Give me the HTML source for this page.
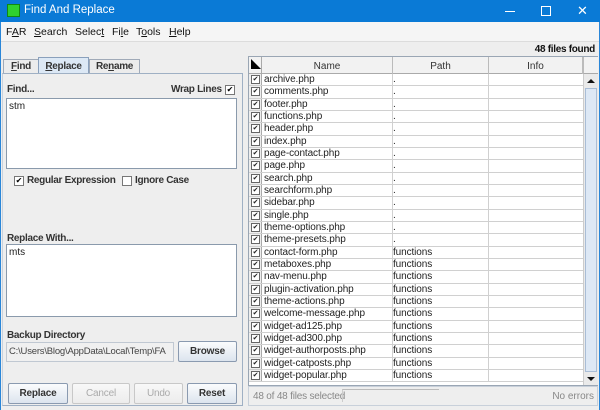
<!DOCTYPE html>
<html><head><style>
*{box-sizing:border-box;margin:0;padding:0}
body{width:600px;height:410px;overflow:hidden;background:#eeeeee;font-family:"Liberation Sans",Arial,sans-serif;font-size:10px;color:#222;position:relative}
.a{position:absolute}
.title{left:0;top:0;width:600px;height:22px;background:#0a7ad6;color:#fff;font-size:11.5px}
.menu{left:1px;top:22px;width:598px;height:20px;background:#f5f5f5;border-bottom:1px solid #dcdcdc}
.menu span{position:absolute;top:4px;font-size:10.5px;color:#111}
.b{font-weight:bold;letter-spacing:-0.3px;color:#333}
.box{background:#fff;border:1px solid #8a9aac}
.cb{width:10px;height:10px;border:1px solid #777;background:#fff;font-size:8px;line-height:8px;text-align:center;color:#000}
.btn{border:1px solid #8a9ab0;background:linear-gradient(#fbfcfd,#dce4ee);text-align:center;font-weight:bold;font-size:10px;letter-spacing:-0.2px;line-height:19px;border-radius:2px;color:#333}
.dis{color:#aaa;font-weight:normal;background:linear-gradient(#f8f8f8,#ececec);border-color:#c8c8c8}
.rows{left:249px;top:74px;width:334px}
.r{height:12.33px;border-bottom:1px solid #d0d0d0;position:relative;background:#fff;font-size:10px;line-height:11px;letter-spacing:-0.1px}
.r .c{position:absolute;left:0;top:0;width:13px;height:100%;background:#eeeeee;border-right:1px solid #aaa}
.r .c i{position:absolute;left:2px;top:1px;width:9px;height:9px;border:1px solid #666;background:#fff;font-style:normal;font-size:7px;line-height:7px;text-align:center}
.r .n{position:absolute;left:15px;top:0}
.r .p{position:absolute;left:144px;top:0}
.r:before{content:"";position:absolute;left:143px;top:0;height:100%;border-left:1px solid #d0d0d0}
.r:after{content:"";position:absolute;left:239px;top:0;height:100%;border-left:1px solid #d0d0d0}
</style></head><body>
<div class="a title">
 <div class="a" style="left:7px;top:4px;width:13px;height:13px;background:#2fd12f;border:1px solid #118811"></div>
 <div class="a" style="left:24px;top:4px">Find And Replace</div>
 <div class="a" style="left:505px;top:11px;width:10px;height:1px;background:#fff"></div>
 <div class="a" style="left:541px;top:6px;width:10px;height:10px;border:1px solid #fff"></div>
 <div class="a" style="left:577px;top:3px;font-size:13px">✕</div>
</div>
<div class="a" style="left:0;top:22px;width:1px;height:388px;background:#2a86d8"></div>
<div class="a" style="left:599px;top:22px;width:1px;height:388px;background:#2a86d8"></div>
<div class="a menu">
 <span style="left:5px">F<u>A</u>R</span><span style="left:33px"><u>S</u>earch</span><span style="left:74px">Selec<u>t</u></span><span style="left:111px">Fi<u>l</u>e</span><span style="left:135px">T<u>o</u>ols</span><span style="left:168px"><u>H</u>elp</span>
</div>
<div class="a b" style="right:5px;top:44px;color:#111">48 files found</div>
<!-- tabs -->
<div class="a b" style="left:3px;top:59px;width:36px;height:15px;border:1px solid #a0aab8;border-bottom:none;background:#ececec;text-align:center;line-height:14px"><u>F</u>ind</div>
<div class="a b" style="left:38px;top:57px;width:51px;height:17px;border:1px solid #8aa0bc;border-bottom:none;background:#dce8f5;text-align:center;line-height:17px"><u>R</u>eplace</div>
<div class="a b" style="left:89px;top:59px;width:51px;height:15px;border:1px solid #a0aab8;border-bottom:none;background:#ececec;text-align:center;line-height:14px">Re<u>n</u>ame</div>
<div class="a" style="left:2px;top:73px;width:241px;height:333px;border:1px solid #9fb0c4;border-left-color:#c8d2de"></div>
<div class="a b" style="left:7px;top:84px">Find...</div>
<div class="a b" style="left:171px;top:84px">Wrap Lines</div>
<div class="a cb" style="left:225px;top:85px">✔</div>
<div class="a box" style="left:6px;top:98px;width:231px;height:71px;padding:2px 2px">stm</div>
<div class="a cb" style="left:14px;top:176px">✔</div>
<div class="a b" style="left:27px;top:175px">Regular Expression</div>
<div class="a cb" style="left:122px;top:176px"></div>
<div class="a b" style="left:135px;top:175px">Ignore Case</div>
<div class="a b" style="left:7px;top:233px">Replace With...</div>
<div class="a box" style="left:6px;top:244px;width:231px;height:73px;padding:2px 2px">mts</div>
<div class="a b" style="left:7px;top:330px">Backup Directory</div>
<div class="a" style="left:6px;top:342px;width:168px;height:20px;border:1px solid #c0c8d2;background:#f0f0f0;line-height:18px;padding-left:2px;font-size:9.5px;letter-spacing:-0.2px;overflow:hidden;white-space:nowrap;color:#444">C:\Users\Blog\AppData\Local\Temp\FA</div>
<div class="a btn" style="left:178px;top:341px;width:59px;height:21px">Browse</div>
<div class="a btn" style="left:8px;top:383px;width:60px;height:21px">Replace</div>
<div class="a btn dis" style="left:72px;top:383px;width:58px;height:21px">Cancel</div>
<div class="a btn dis" style="left:134px;top:383px;width:49px;height:21px">Undo</div>
<div class="a btn" style="left:187px;top:383px;width:50px;height:21px">Reset</div>
<!-- table -->
<div class="a" style="left:248px;top:56px;width:350px;height:330px;border:1px solid #9aa6b4;background:#fff"></div>
<div class="a" style="left:249px;top:57px;width:334px;height:17px;background:#f2f2f2;border-bottom:1px solid #aaa"></div>
<div class="a" style="left:249px;top:57px;width:13px;height:17px;border-right:1px solid #aaa"></div>
<div class="a" style="left:251px;top:59px;width:0;height:0;border-left:10px solid transparent;border-top:10px solid #000;transform:scaleY(-1) scaleX(-1)"></div>
<div class="a" style="left:392px;top:57px;width:1px;height:17px;background:#bbb"></div>
<div class="a" style="left:488px;top:57px;width:1px;height:17px;background:#bbb"></div>
<div class="a" style="left:582px;top:57px;width:1px;height:17px;background:#bbb"></div>
<div class="a" style="left:262px;top:61px;width:130px;text-align:center;color:#333">Name</div>
<div class="a" style="left:393px;top:61px;width:95px;text-align:center;color:#333">Path</div>
<div class="a" style="left:489px;top:61px;width:93px;text-align:center;color:#333">Info</div>
<div class="a" style="left:583px;top:57px;width:15px;height:17px;background:#f2f2f2;border-left:1px solid #bbb;border-bottom:1px solid #aaa"></div>
<!-- scrollbar -->
<div class="a" style="left:583px;top:74px;width:15px;height:311px;background:#eaeaea;border-left:1px solid #ccc"></div>
<div class="a" style="left:585px;top:88px;width:12px;height:284px;background:#dde8f5;border:1px solid #a9bdd6"></div>
<div class="a" style="left:587px;top:79px;border-left:4px solid transparent;border-right:4px solid transparent;border-bottom:4px solid #111"></div>
<div class="a" style="left:587px;top:377px;border-left:4px solid transparent;border-right:4px solid transparent;border-top:4px solid #111"></div>
<div class="a rows">
<div class="r"><div class="c"><i>✔</i></div><span class="n">archive.php</span><span class="p">.</span></div>
<div class="r"><div class="c"><i>✔</i></div><span class="n">comments.php</span><span class="p">.</span></div>
<div class="r"><div class="c"><i>✔</i></div><span class="n">footer.php</span><span class="p">.</span></div>
<div class="r"><div class="c"><i>✔</i></div><span class="n">functions.php</span><span class="p">.</span></div>
<div class="r"><div class="c"><i>✔</i></div><span class="n">header.php</span><span class="p">.</span></div>
<div class="r"><div class="c"><i>✔</i></div><span class="n">index.php</span><span class="p">.</span></div>
<div class="r"><div class="c"><i>✔</i></div><span class="n">page-contact.php</span><span class="p">.</span></div>
<div class="r"><div class="c"><i>✔</i></div><span class="n">page.php</span><span class="p">.</span></div>
<div class="r"><div class="c"><i>✔</i></div><span class="n">search.php</span><span class="p">.</span></div>
<div class="r"><div class="c"><i>✔</i></div><span class="n">searchform.php</span><span class="p">.</span></div>
<div class="r"><div class="c"><i>✔</i></div><span class="n">sidebar.php</span><span class="p">.</span></div>
<div class="r"><div class="c"><i>✔</i></div><span class="n">single.php</span><span class="p">.</span></div>
<div class="r"><div class="c"><i>✔</i></div><span class="n">theme-options.php</span><span class="p">.</span></div>
<div class="r"><div class="c"><i>✔</i></div><span class="n">theme-presets.php</span><span class="p">.</span></div>
<div class="r"><div class="c"><i>✔</i></div><span class="n">contact-form.php</span><span class="p">functions</span></div>
<div class="r"><div class="c"><i>✔</i></div><span class="n">metaboxes.php</span><span class="p">functions</span></div>
<div class="r"><div class="c"><i>✔</i></div><span class="n">nav-menu.php</span><span class="p">functions</span></div>
<div class="r"><div class="c"><i>✔</i></div><span class="n">plugin-activation.php</span><span class="p">functions</span></div>
<div class="r"><div class="c"><i>✔</i></div><span class="n">theme-actions.php</span><span class="p">functions</span></div>
<div class="r"><div class="c"><i>✔</i></div><span class="n">welcome-message.php</span><span class="p">functions</span></div>
<div class="r"><div class="c"><i>✔</i></div><span class="n">widget-ad125.php</span><span class="p">functions</span></div>
<div class="r"><div class="c"><i>✔</i></div><span class="n">widget-ad300.php</span><span class="p">functions</span></div>
<div class="r"><div class="c"><i>✔</i></div><span class="n">widget-authorposts.php</span><span class="p">functions</span></div>
<div class="r"><div class="c"><i>✔</i></div><span class="n">widget-catposts.php</span><span class="p">functions</span></div>
<div class="r"><div class="c"><i>✔</i></div><span class="n">widget-popular.php</span><span class="p">functions</span></div>
</div>
<!-- status -->
<div class="a" style="left:248px;top:386px;width:350px;height:20px;background:#eeeeee;border:1px solid #c8d0da"></div>
<div class="a" style="left:253px;top:391px;color:#888;letter-spacing:-0.2px">48 of 48 files selected</div>
<div class="a" style="left:342px;top:389px;width:97px;height:13px;border-top:1px solid #bbb;border-left:1px solid #ccc"></div>
<div class="a" style="right:6px;top:391px;color:#888">No errors</div>
</body></html>
